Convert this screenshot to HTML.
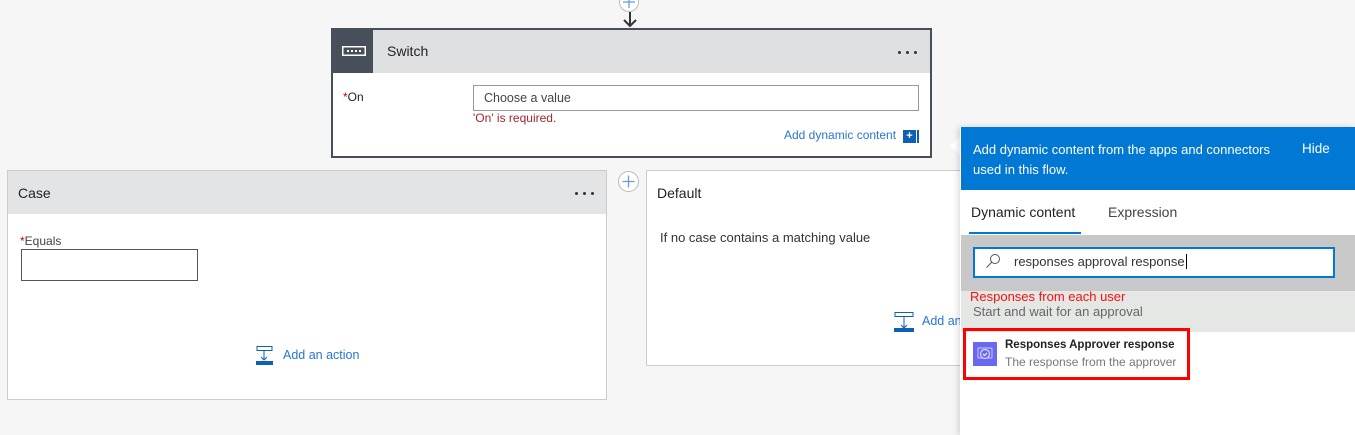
<!DOCTYPE html><html><head><style>
*{box-sizing:border-box;margin:0;padding:0}
body{width:1355px;height:435px;background:#f6f6f6;font-family:"Segoe UI","Liberation Sans",sans-serif;font-size:13px;position:relative;overflow:hidden;color:#222}
.a{position:absolute}
.link{color:#2a75d0}
.dot{position:absolute;width:3px;height:3px;border-radius:50%;background:#333}
</style></head><body>
<!-- top connector -->
<div class="a" style="left:619px;top:-8px;width:20px;height:20px;border:1.5px solid #bbb;border-radius:50%;background:#fff"></div>
<svg class="a" style="left:619px;top:-8px" width="20" height="20"><path d="M10 4V16M4 10H16" stroke="#6a9be0" stroke-width="1.3"/></svg>
<svg class="a" style="left:622px;top:12px" width="16" height="16"><path d="M8 0V14M2 8L8 14L14 8" stroke="#333" stroke-width="2" fill="none"/></svg>
<!-- Switch card -->
<div class="a" style="left:331px;top:28px;width:601px;height:130px;border:2px solid #474f5a;background:#fff"></div>
<div class="a" style="left:333px;top:30px;width:597px;height:43px;background:#dfe0e2"></div>
<div class="a" style="left:333px;top:30px;width:40px;height:43px;background:#474f5a"></div>
<svg class="a" style="left:342px;top:46px" width="24" height="10"><rect x="0.75" y="0.75" width="22.5" height="8.5" fill="none" stroke="#fff" stroke-width="1.5"/><rect x="5" y="4" width="2" height="2" fill="#fff"/><rect x="9" y="4" width="2" height="2" fill="#fff"/><rect x="13" y="4" width="2" height="2" fill="#fff"/><rect x="17" y="4" width="2" height="2" fill="#fff"/></svg>
<div class="a" style="left:387px;top:43px;font-size:14px">Switch</div>
<div class="dot" style="left:898px;top:51px"></div><div class="dot" style="left:906px;top:51px"></div><div class="dot" style="left:914px;top:51px"></div>
<div class="a" style="left:343px;top:90px;font-size:12px"><span style="color:#c00">*</span>On</div>
<div class="a" style="left:473px;top:85px;width:446px;height:26px;border:1px solid #999;padding:5px 10px;font-size:12.5px;color:#444">Choose a value</div>
<div class="a" style="left:473px;top:111px;font-size:12px;color:#a4262c">'On' is required.</div>
<div class="a link" style="left:784px;top:128px;font-size:12px">Add dynamic content</div>
<div class="a" style="left:903px;top:130px;width:13px;height:13px;background:#0f5fb5;color:#fff;font-size:11px;line-height:12px;text-align:center;font-weight:bold">+</div>
<div class="a" style="left:917px;top:130px;width:2px;height:13px;background:#0f5fb5"></div>
<!-- Case card -->
<div class="a" style="left:7px;top:170px;width:600px;height:230px;border:1px solid #ccc;background:#fff"></div>
<div class="a" style="left:8px;top:171px;width:598px;height:43px;background:#e3e4e6"></div>
<div class="a" style="left:18px;top:185px;font-size:14px">Case</div>
<div class="dot" style="left:575px;top:192px"></div><div class="dot" style="left:583px;top:192px"></div><div class="dot" style="left:591px;top:192px"></div>
<div class="a" style="left:20px;top:234px;font-size:12px;color:#444"><span style="color:#c00">*</span>Equals</div>
<div class="a" style="left:21px;top:249px;width:177px;height:32px;border:1px solid #555;background:#fff"></div>
<svg class="a" style="left:256px;top:346px" width="20" height="20"><rect x="1" y="0.5" width="15" height="4" fill="none" stroke="#0f5fb5"/><path d="M8 4V14M5 11L8 14L11 11" stroke="#0f5fb5" fill="none"/><rect x="0" y="15" width="17" height="4" fill="#0f5fb5"/></svg>
<div class="a link" style="left:283px;top:348px;font-size:12.5px">Add an action</div>
<!-- plus between -->
<div class="a" style="left:618px;top:171px;width:21px;height:21px;border:1.5px solid #bbb;border-radius:50%;background:#fff"></div>
<svg class="a" style="left:618px;top:171px" width="21" height="21"><path d="M10.5 4.5V16.5M4.5 10.5H16.5" stroke="#6a9be0" stroke-width="1.3"/></svg>
<!-- Default -->
<div class="a" style="left:646px;top:170px;width:330px;height:196px;border:1px solid #ccc;background:#fff"></div>
<div class="a" style="left:657px;top:185px;font-size:14px">Default</div>
<div class="a" style="left:660px;top:230px;font-size:13px;color:#333">If no case contains a matching value</div>
<svg class="a" style="left:894px;top:312px" width="22" height="22"><rect x="1" y="0.5" width="18" height="4" fill="none" stroke="#0f5fb5"/><path d="M10 4V16M7 13L10 16L13 13" stroke="#0f5fb5" fill="none"/><rect x="0" y="16" width="20" height="4" fill="#0f5fb5"/></svg>
<div class="a link" style="left:922px;top:314px;font-size:12.5px">Add an</div>
<!-- Dynamic panel -->
<div class="a" style="left:950px;top:136px;width:0;height:0;border-top:10px solid transparent;border-bottom:10px solid transparent;border-right:11px solid #fff"></div>
<div class="a" style="left:960px;top:127px;width:395px;height:308px;background:#fff;box-shadow:-2px 0 6px rgba(0,0,0,0.15)"></div>
<div class="a" style="left:961px;top:127px;width:394px;height:63px;background:#0078d4"></div>
<div class="a" style="left:973px;top:140px;color:#fff;font-size:13px;line-height:20px;width:310px">Add dynamic content from the apps and connectors used in this flow.</div>
<div class="a" style="left:1302px;top:141px;color:#fff;font-size:13.5px">Hide</div>
<div class="a" style="left:971px;top:204px;font-size:14px;color:#222">Dynamic content</div>
<div class="a" style="left:1108px;top:204px;font-size:14px;color:#444">Expression</div>
<div class="a" style="left:969px;top:232px;width:112px;height:2px;background:#0078d4"></div>
<div class="a" style="left:961px;top:235px;width:394px;height:56px;background:#c8c8c8"></div>
<div class="a" style="left:973px;top:247px;width:362px;height:31px;border:2px solid #0078d4;background:#fff"></div>
<svg class="a" style="left:985px;top:253px" width="16" height="16"><circle cx="10" cy="6" r="4.5" fill="none" stroke="#555"/><path d="M7 9L1.5 14.5" stroke="#555"/></svg>
<div class="a" style="left:1014px;top:254px;font-size:13px;color:#333">responses approval response<span style="border-left:1px solid #000;margin-left:1px"></span></div>
<div class="a" style="left:961px;top:291px;width:394px;height:41px;background:#e5e7e5"></div>
<div class="a" style="left:970px;top:289px;font-size:13px;color:#f21010">Responses from each user</div>
<div class="a" style="left:973px;top:304px;font-size:13px;color:#666">Start and wait for an approval</div>
<div class="a" style="left:963px;top:328px;width:227px;height:52px;border:3px solid #f00"></div>
<div class="a" style="left:973px;top:342px;width:24px;height:24px;background:#6b68f0"></div>
<svg class="a" style="left:975px;top:344px" width="20" height="20"><rect x="3" y="4" width="14" height="10" rx="1" fill="none" stroke="#b8b6ff" stroke-width="1.2"/><circle cx="10" cy="10" r="4.5" fill="#6b68f0" stroke="#d8d7ff" stroke-width="1.2"/><path d="M8 10L9.5 11.5L12 9" stroke="#fff" fill="none"/></svg>
<div class="a" style="left:1005px;top:339px;font-size:11.5px;font-weight:600;color:#222">Responses Approver response</div>
<div class="a" style="left:1005px;top:355px;font-size:12px;color:#777">The response from the approver</div>
</body></html>
